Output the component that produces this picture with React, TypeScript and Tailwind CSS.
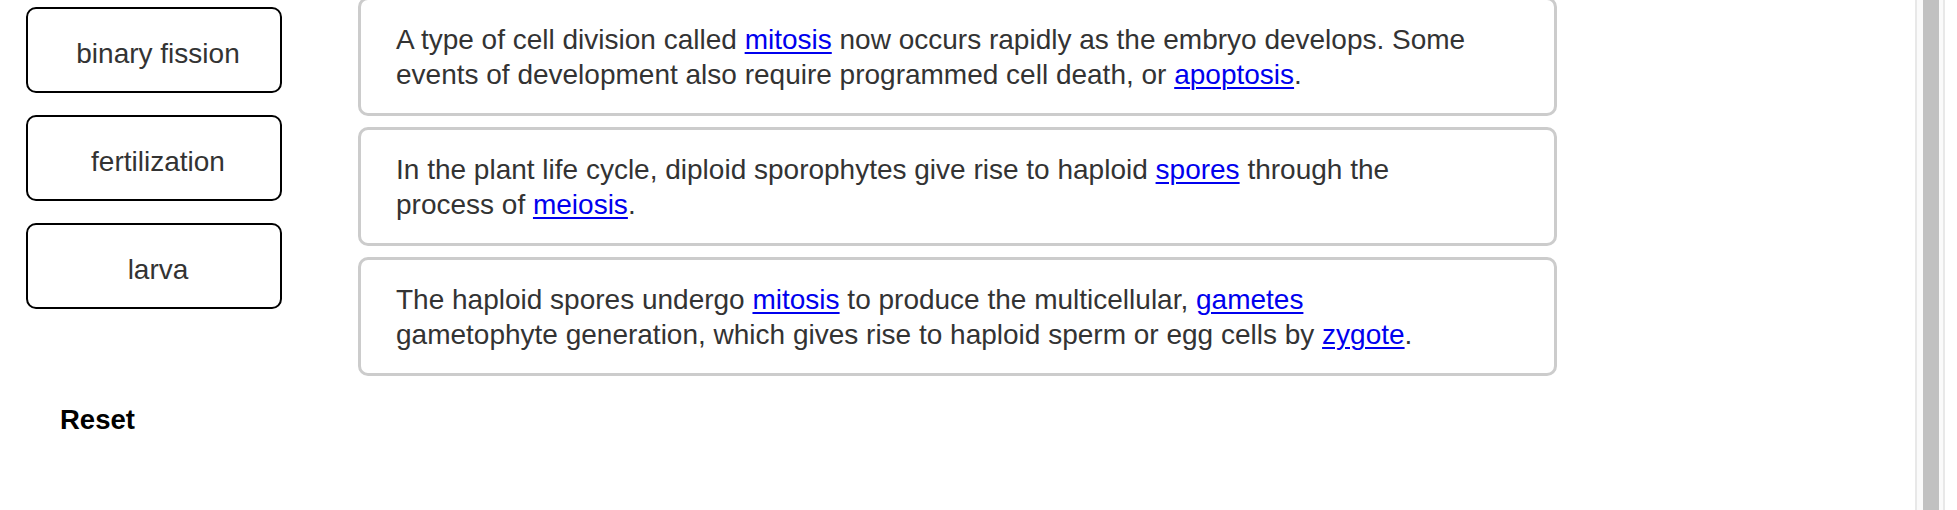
import React from 'react'

const terms = ['binary fission', 'fertilization', 'larva']

function Link({ children }: { children: React.ReactNode }) {
  return <a href="#" className="text-[#0000ee] underline underline-offset-[3px] decoration-[1.5px]">{children}</a>
}

export default function App() {
  return (
    <div
      className="flex h-[510px] w-full overflow-hidden bg-white"
      style={{ fontFamily: '"Liberation Sans", Arial, sans-serif' }}
    >
      <div className="flex flex-1 items-start pl-[26px]">
        {/* Word bank */}
        <div className="mt-[7px] flex w-[256px] shrink-0 flex-col">
          <div className="flex flex-col gap-[22px]">
            {terms.map((t) => (
              <div
                key={t}
                className="flex h-[86px] items-center justify-center rounded-[10px] border-2 border-black pl-[8px] pt-[8px] text-[28px] text-[#333]"
              >
                {t}
              </div>
            ))}
          </div>
          <button className="mt-[95px] ml-[34px] self-start text-left text-[27.5px] font-bold leading-[1.15] text-black">
            Reset
          </button>
        </div>

        {/* Sentences */}
        <div className="-mt-[3px] ml-[76px] flex w-[1199px] shrink-0 flex-col gap-[11px]">
          <div className="rounded-[10px] border-[3px] border-[#cccccc] pt-[22px] pb-[21px] pl-[35px] text-[28px] leading-[35px] text-[#333]">
            A type of cell division called <Link>mitosis</Link> now occurs rapidly as the embryo develops. Some
            <br />
            events of development also require programmed cell death, or <Link>apoptosis</Link>.
          </div>
          <div className="rounded-[10px] border-[3px] border-[#cccccc] pt-[22px] pb-[21px] pl-[35px] text-[28px] leading-[35px] text-[#333]">
            In the plant life cycle, diploid sporophytes give rise to haploid <Link>spores</Link> through the
            <br />
            process of <Link>meiosis</Link>.
          </div>
          <div className="rounded-[10px] border-[3px] border-[#cccccc] pt-[22px] pb-[21px] pl-[35px] text-[28px] leading-[35px] text-[#333]">
            The haploid spores undergo <Link>mitosis</Link> to produce the multicellular, <Link>gametes</Link>
            <br />
            gametophyte generation, which gives rise to haploid sperm or egg cells by <Link>zygote</Link>.
          </div>
        </div>
      </div>

      {/* Scrollbar */}
      <div className="flex h-full w-[30px] shrink-0 border-x-2 border-x-[#e8e8e8] bg-[#fafafa] pl-[6px]">
        <div className="h-full w-[16px] bg-[#c1c1c1]" />
      </div>
      <div className="w-[12px] shrink-0" />
    </div>
  )
}
